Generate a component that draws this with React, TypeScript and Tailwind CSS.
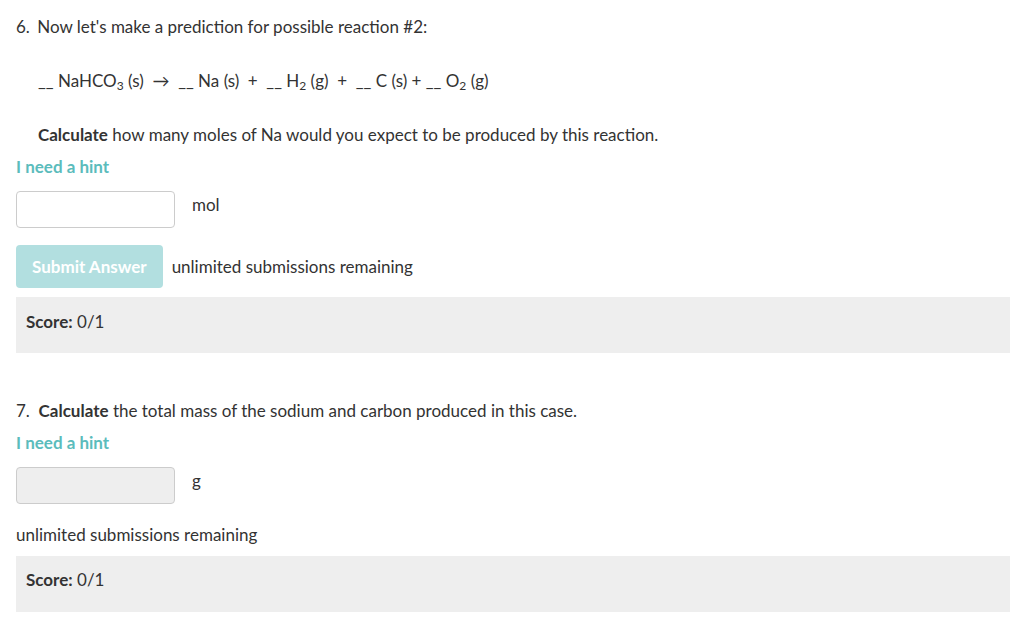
export default function App() {
  return (
    <main
      className="min-h-screen bg-white px-4 pt-[15px] text-[17px] leading-6 text-[#333333]"
      style={{ fontFamily: 'Lato, "Noto Sans", sans-serif' }}
    >
      <p>
        6. <span className="ml-[3px]">Now let's make a prediction for possible reaction #2:</span>
      </p>

      <p className="mt-[30px] pl-[22px] whitespace-pre">
        {"__ NaHCO"}
        <sub className="text-[12px]">3</sub>
        {" (s)  \u2192  __ Na (s) "}
        <span className="ml-[4px]">+</span>
        {"  __ H"}
        <sub className="text-[12px]">2</sub>
        {" (g)  +  __ C (s) + __ O"}
        <sub className="text-[12px]">2</sub>
        {" (g)"}
      </p>

      <p className="mt-[30px] pl-[22px]">
        <b className="font-bold">Calculate</b> how many moles of Na would you expect to be produced by this
        reaction.
      </p>

      <Hint />

      <AnswerRow unit="mol" />

      <div className="mt-[17px] flex items-center gap-[9px]">
        <button className="h-[43px] rounded-[4px] bg-[#b2dfe0] px-4 text-[17px] font-bold text-white">
          Submit Answer
        </button>
        <span>unlimited submissions remaining</span>
      </div>

      <Score className="mt-[9px] pt-[13px]" />

      <p className="mt-[46px]">
        7.&nbsp; <b className="font-bold">Calculate</b> the total mass of the sodium and carbon produced in this
        case.
      </p>

      <Hint />

      <AnswerRow unit="g" disabled />

      <p className="mt-[19px]">unlimited submissions remaining</p>

      <Score className="mt-[9px] pt-[12px]" />
    </main>
  );
}

function Hint() {
  return <p className="mt-2 font-bold text-[#5bbcbc]">I need a hint</p>;
}

function AnswerRow({ unit, disabled }: { unit: string; disabled?: boolean }) {
  return (
    <div className="mt-[12px] flex items-start gap-[17px]">
      <input
        disabled={disabled}
        className={
          disabled
            ? "h-[37px] w-[159px] rounded-[4px] border border-[#cccccc] bg-[#eeeeee]"
            : "h-[37px] w-[159px] rounded-[4px] border border-[#cccccc] bg-white"
        }
      />
      <span className="mt-[2px]">{unit}</span>
    </div>
  );
}

function Score({ className }: { className: string }) {
  return (
    <div className={"h-[56px] w-[994px] bg-[#eeeeee] pl-[10px] " + className}>
      <b className="font-bold">Score:</b> 0/1
    </div>
  );
}
